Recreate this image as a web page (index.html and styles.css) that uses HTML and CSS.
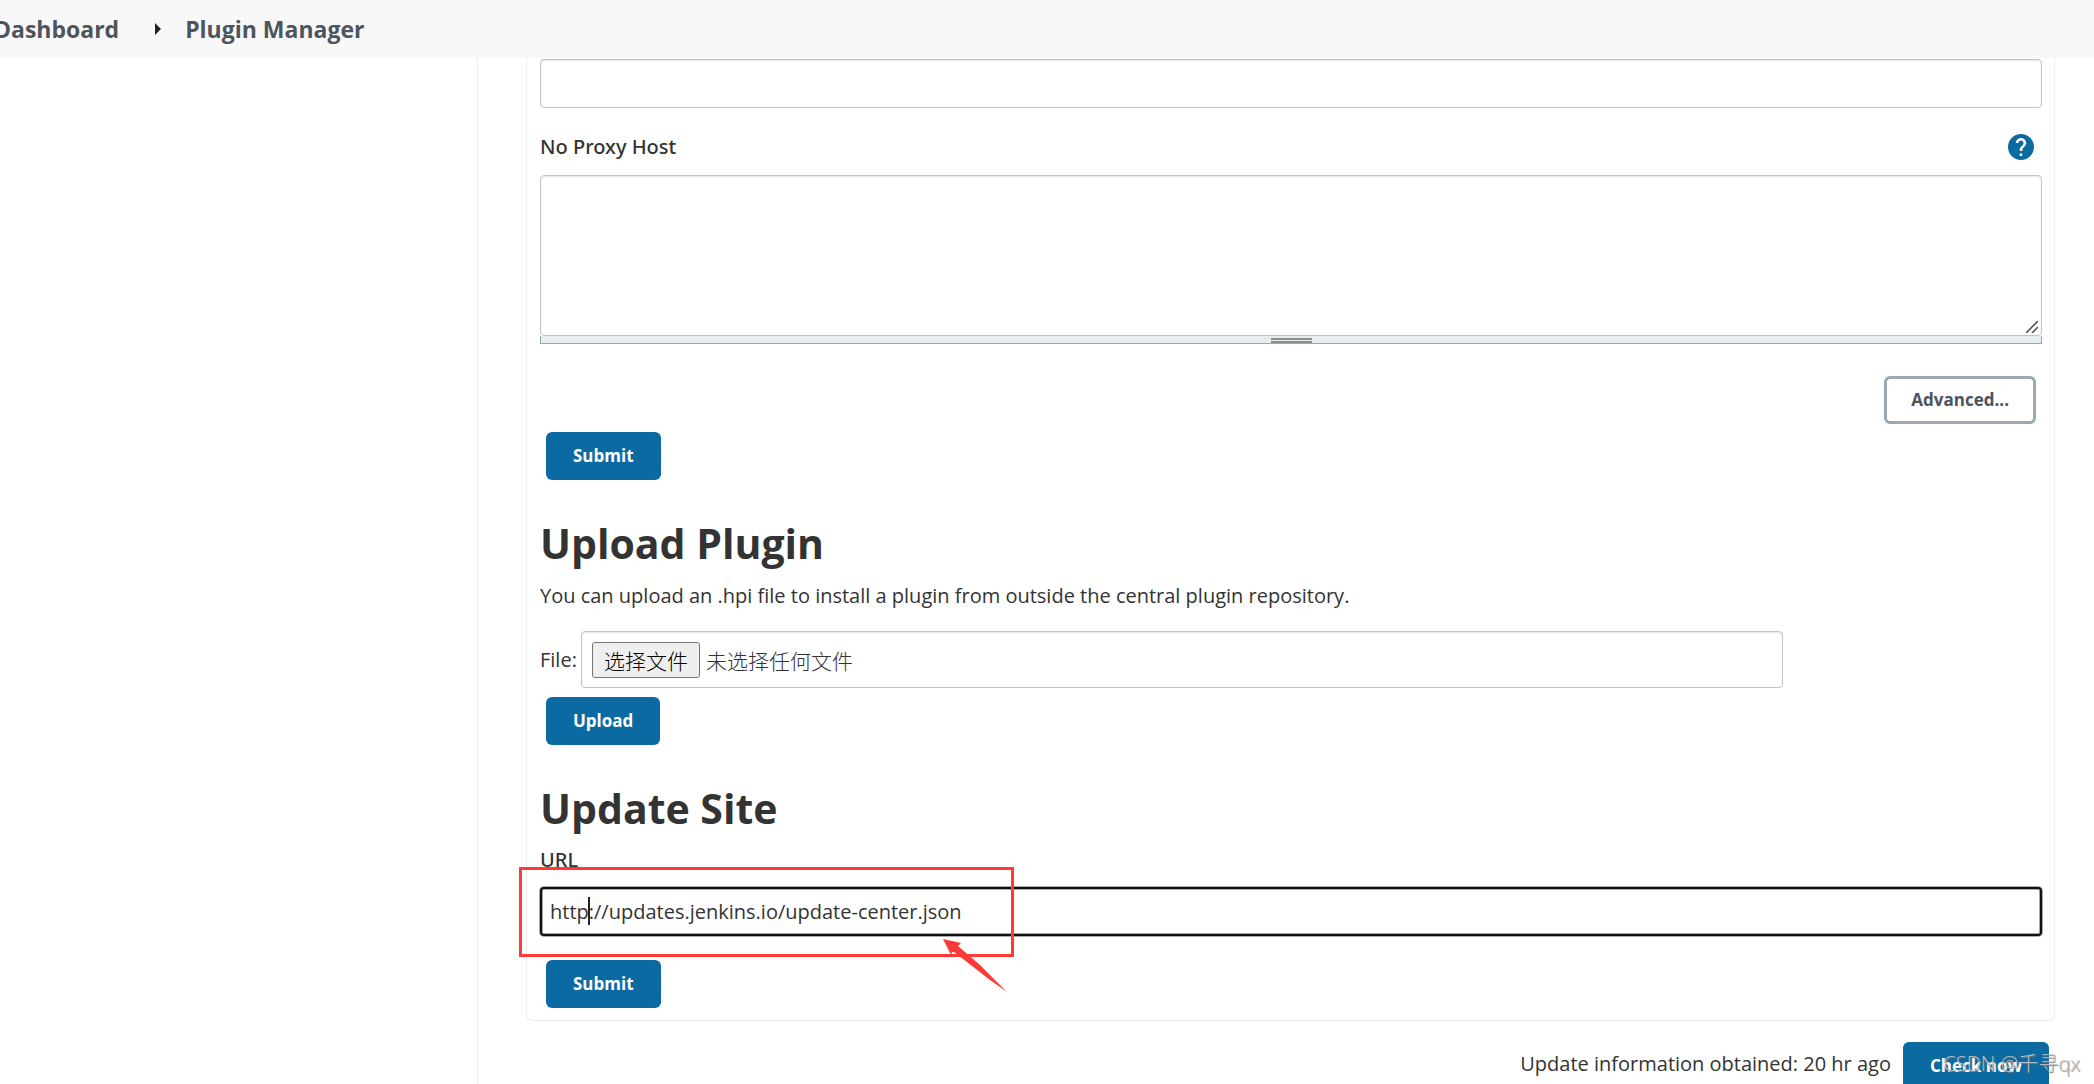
FILE: index.html
```html
<!DOCTYPE html>
<html lang="en">
<head>
    <meta charset="UTF-8">
    <meta name="viewport" content="width=device-width, initial-scale=1.0">
    <title>Plugin Manager [Jenkins]</title>
    <link rel="stylesheet" href="styles.css">
</head>
<body>
    <header class="breadcrumbs">
        <a href="#">Dashboard</a>
        <svg class="arrow" width="6" height="12" viewBox="0 0 6 12"><path d="M0 0L6 6L0 12Z" fill="#222"/></svg>
        <a href="#">Plugin Manager</a>
    </header>
    <div class="page">
        <aside class="side-panel"></aside>
        <main class="main-panel">
            <div class="pane">
                <form class="proxy-form">
                    <input class="text-input" type="text" aria-label="Password">
                    <div class="label-row">
                        <label class="field-label" for="noProxy">No Proxy Host</label>
                        <a class="help" href="#" aria-label="Help">
                            <svg width="26" height="26" viewBox="2 2 20 20"><path fill="#0b6aa2" d="M12 2C6.48 2 2 6.48 2 12s4.48 10 10 10 10-4.48 10-10S17.52 2 12 2zm1 17h-2v-2h2v2zm2.070-7.750l-.9.920C13.450 12.900 13 13.500 13 15h-2v-.5c0-1.100.450-2.100 1.170-2.830l1.240-1.260c.370-.360.590-.860.590-1.410 0-1.100-.9-2-2-2s-2 .9-2 2H8c0-2.210 1.790-4 4-4s4 1.790 4 4c0 .880-.360 1.680-.930 2.250z"/></svg>
                        </a>
                    </div>
                    <div class="area-box">
                        <textarea class="text-area" id="noProxy"></textarea>
                        <svg class="resizer" width="12" height="12" viewBox="0 0 12 12"><path d="M0 12L12 0M6 12L12 6" stroke="#444" stroke-width="1.500"/></svg>
                    </div>
                    <div class="textarea-handle"><span class="grip"></span></div>
                    <div class="advanced-row">
                        <button class="btn btn-outline" type="button">Advanced...</button>
                    </div>
                    <button class="btn submit" type="button">Submit</button>
                </form>

                <h1>Upload Plugin</h1>
                <p class="description">You can upload an .hpi file to install a plugin from outside the central plugin repository.</p>
                <form class="upload-form">
                    <div class="file-row">
                        <label for="pluginFile">File:</label>
                        <div class="file-box">
                            <span class="file-button">选择文件</span>
                            <span class="file-name">未选择任何文件</span>
                            <input class="file-input" id="pluginFile" type="file">
                        </div>
                    </div>
                    <button class="btn upload" type="button">Upload</button>
                </form>

                <h1>Update Site</h1>
                <form class="site-form">
                    <label class="field-label url-label" for="siteUrl">URL</label>
                    <div class="url-box">
                        <input class="text-input active" id="siteUrl" type="text" value="http://updates.jenkins.io/update-center.json">
                        <span class="caret"></span>
                        <span class="mark"></span>
                        <svg class="mark-arrow" width="64" height="54" viewBox="0 0 64 54"><path fill="#fd3a38" d="M0 0L18 4L15 7L37 26L64 53L47 41L11 13L9 13L8 16Z"/></svg>
                    </div>
                    <button class="btn save" type="button">Submit</button>
                </form>
            </div>
            <div class="update-info">
                <span>Update information obtained: 20 hr ago</span>
                <button class="btn" type="button">Check now</button>
            </div>
        </main>
    </div>
    <div class="watermark">CSDN @千寻qx</div>
</body>
</html>
```

FILE: styles.css
```css
*{
    box-sizing: border-box;
    margin: 0;
    padding: 0;
}
body{
    position: relative;
    height: 100vh;
    overflow: hidden;
    background-color: #fff;
    color: #333;
    font-family: "Open Sans", "Noto Sans CJK SC", sans-serif;
    font-size: 20px;
    line-height: 30px;
}
input, textarea, button{
    font: inherit;
    color: inherit;
}

/* top bar */
.breadcrumbs{
    display: flex;
    align-items: center;
    height: 58px;
    background-color: #f8f8f8;
    overflow: hidden;
}
.breadcrumbs a{
    color: #4d545d;
    font-size: 23px;
    font-weight: bold;
    text-decoration: none;
}
.breadcrumbs a:first-child{
    margin-left: -6px;
}
.arrow{
    margin: 0 24px 0 36px;
}

.page{
    display: flex;
}
.side-panel{
    flex: 0 0 478px;
    border-right: 1px solid #e6eef2;
}
.main-panel{
    flex: 1;
    padding: 0 39px 0 48px;
}
.pane{
    padding: 1px 12px 12px 13px;
    border: 1px solid #e9eff2;
    border-top: none;
    border-radius: 0 0 6px 6px;
}

/* fields */
.text-input{
    display: block;
    width: 100%;
    height: 49px;
    padding: 0 10px;
    border: 1px solid #c4c4c4;
    border-radius: 4px;
    box-shadow: inset 0 1px 2px rgba(0,0,0,0.1);
    outline: none;
}
.text-input.active{
    padding: 0 8px;
    border: 2px solid #101010;
    box-shadow: 0 0 0 1px #a8adac, inset 0 0 0 1px #a8a8a8;
}
.label-row{
    display: flex;
    justify-content: space-between;
    align-items: center;
    height: 26px;
    margin: 26px 0 15px;
    padding-right: 8px;
}
.field-label{
    font-family: "Noto Sans", sans-serif;
    font-weight: 500;
}
.help{
    display: flex;
}
.area-box{
    position: relative;
}
.text-area{
    display: block;
    width: 100%;
    height: 161px;
    padding: 8px 10px;
    border: 1px solid #c4c4c4;
    border-radius: 4px;
    box-shadow: inset 0 1px 2px rgba(0,0,0,0.1);
    resize: none;
}
.resizer{
    position: absolute;
    right: 4px;
    bottom: 3px;
}
.textarea-handle{
    height: 8px;
    padding-top: 2px;
    background-color: #e8edf0;
    border: 1px solid #9aa5ac;
    border-top: none;
}
.grip{
    display: block;
    width: 41px;
    height: 5px;
    margin: 0 auto;
    border-top: 2px solid #8b8f88;
    border-bottom: 2px solid #8b8f88;
}

/* buttons */
.btn{
    display: block;
    height: 48px;
    padding: 0 27px;
    background-color: #0b6aa2;
    border: none;
    border-radius: 6px;
    color: #fff;
    font-size: 17px;
    font-weight: bold;
}
.btn-outline{
    padding: 0 24px;
    background-color: #fff;
    border: 3px solid #9aa8b0;
    color: #4d545d;
}
.advanced-row{
    display: flex;
    justify-content: flex-end;
    margin-top: 32px;
    padding-right: 6px;
}
.submit{
    margin: 8px 0 0 6px;
}
.upload{
    margin: 9px 0 0 6px;
}
.save{
    margin: 24px 0 0 6px;
}

h1{
    margin-top: 38px;
    font-size: 41px;
    line-height: 50px;
}
.description{
    margin-top: 13px;
}
.file-row{
    display: flex;
    align-items: center;
    gap: 4px;
    margin-top: 20px;
}
.file-box{
    position: relative;
    display: flex;
    align-items: center;
    gap: 6px;
    width: 80%;
    height: 57px;
    padding: 0 10px;
    border: 1px solid #c4c4c4;
    border-radius: 4px;
    box-shadow: inset 0 1px 2px rgba(0,0,0,0.1);
    font-family: "Noto Sans CJK SC", sans-serif;
    font-size: 21px;
    font-weight: 300;
}
.file-button{
    height: 36px;
    padding: 0 11px;
    background-color: #efefef;
    border: 1px solid #767676;
    border-radius: 3px;
    color: #000;
    line-height: 34px;
}
.file-input{
    position: absolute;
    inset: 0;
    width: 100%;
    opacity: 0;
}

/* update site */
.url-label{
    display: block;
    margin: 12px 0;
}
.url-box{
    position: relative;
}
.caret{
    position: absolute;
    left: 48px;
    top: 10px;
    width: 2px;
    height: 28px;
    background-color: #222;
}
.mark{
    position: absolute;
    left: -21px;
    top: -20px;
    width: 495px;
    height: 90px;
    border: 3px solid #fd3a38;
    pointer-events: none;
}
.mark-arrow{
    position: absolute;
    left: 403px;
    top: 52px;
    z-index: 1;
}
.update-info{
    display: flex;
    justify-content: flex-end;
    gap: 12px;
    margin-top: 21px;
    padding-right: 6px;
}
.update-info span{
    padding-top: 7px;
}
.watermark{
    position: absolute;
    right: 14px;
    bottom: 5px;
    color: rgba(200,200,200,0.9);
    font-size: 20px;
    font-weight: 300;
    text-shadow: 1px 1px 1px #777;
}
```
